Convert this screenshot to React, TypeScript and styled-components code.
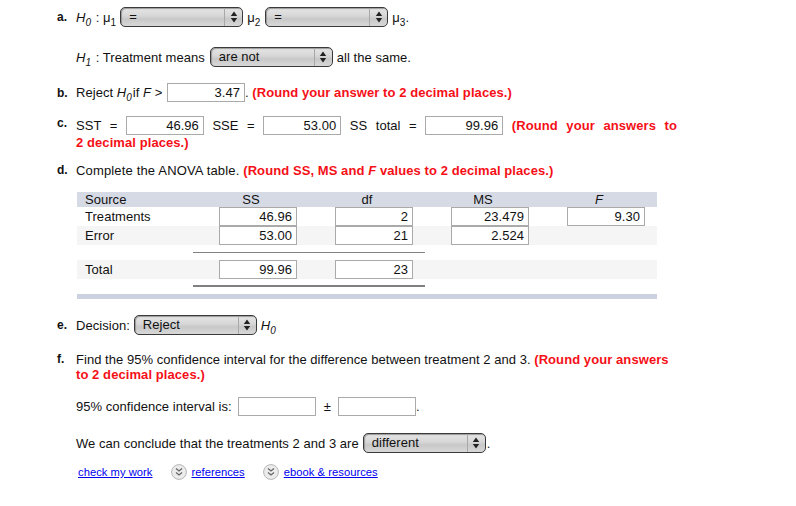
import React from 'react';
import styled, { createGlobalStyle } from 'styled-components';

const GlobalStyle = createGlobalStyle`
  html, body {
    margin: 0;
    padding: 0;
    background: #fff;
  }
  body {
    font-family: "Liberation Sans", Arial, sans-serif;
    font-size: 13px;
    letter-spacing: 0.04px;
    color: #111;
  }
`;

const Page = styled.div`
  width: 796px;
  height: 506px;
  overflow: hidden;
  box-sizing: border-box;
  padding: 7px 0 0 57px;
`;

const Row = styled.div<{ $top?: number; $height?: number; $indent?: boolean }>`
  display: flex;
  align-items: center;
  height: ${(p) => p.$height ?? 20}px;
  margin-top: ${(p) => p.$top ?? 0}px;
  padding-left: ${(p) => (p.$indent ? 19 : 0)}px;
  white-space: pre;
`;

const Label = styled.b`
  display: inline-block;
  flex: none;
  width: 19px;
  font-size: 12px;
`;

const Para = styled.div<{ $top?: number }>`
  display: flex;
  margin-top: ${(p) => p.$top ?? 0}px;
`;

const ParaText = styled.div`
  width: 601px;
  line-height: 15px;
`;

const JustifiedLine = styled.div`
  height: 19px;
  line-height: 19px;
  text-align: justify;
  text-align-last: justify;
`;

const Red = styled.b`
  letter-spacing: 0.08px;
  color: #f50f17;
`;

const Wide = styled.span`
  letter-spacing: 0.16px;
`;

const Sym = styled.i`
  font-style: italic;
`;

const Sub = styled.sub`
  font-size: 10px;
  line-height: 0;
`;

const HypothesisSym = styled(Sym)`
  margin-right: 1px;
`;

const Select = styled.div<{ $left?: number; $right?: number }>`
  flex: none;
  display: inline-flex;
  box-sizing: border-box;
  width: 123px;
  height: 20px;
  margin: 0 ${(p) => p.$right ?? 4}px 0 ${(p) => p.$left ?? 4}px;
  border: 1px solid #3a3a3a;
  border-radius: 5px;
  background: linear-gradient(#e6e6e6 0%, #d6d6d6 45%, #c8c8c8 60%, #d8d8d8 100%);
  box-shadow: inset 1px 1px 1px #999;
`;

const SelectValue = styled.span`
  flex: 1;
  padding-left: 8px;
  line-height: 18px;
`;

const SelectArrows = styled.span`
  flex: none;
  display: flex;
  align-items: center;
  justify-content: center;
  width: 17px;
  border-left: 1px solid #a8a8a8;
`;

const Input = styled.span<{ $left?: number }>`
  flex: none;
  display: inline-block;
  box-sizing: border-box;
  width: 78px;
  height: 19px;
  margin-left: ${(p) => p.$left ?? 0}px;
  padding-right: 4px;
  border: 1px solid #aaa;
  background: #fff;
  text-align: right;
  text-align-last: right;
  line-height: 17px;
  vertical-align: top;
`;

const PlusMinus = styled.span`
  margin: 0 7px 0 8px;
`;

const Table = styled.div`
  width: 580px;
  margin: 14px 0 0 20px;
`;

const Grid = styled.div<{ $shaded?: boolean; $top?: number }>`
  display: grid;
  grid-template-columns: 142px 78px 38px 78px 38px 78px 38px 78px 12px;
  align-items: center;
  height: 19px;
  margin-top: ${(p) => p.$top ?? 0}px;
  background: ${(p) => (p.$shaded ? '#f5f5f5' : '#fff')};
`;

const Head = styled(Grid)`
  height: 15px;
  background: #d6dae5;
`;

const RowName = styled.span`
  padding-left: 8px;
`;

const HeadCell = styled.span<{ $col: number }>`
  grid-column: ${(p) => p.$col};
  padding-right: 14px;
  text-align: center;
`;

const Cell = styled.span<{ $col: number }>`
  grid-column: ${(p) => p.$col};
  display: flex;
`;

const Rule = styled.div<{ $thick?: boolean; $top: number }>`
  width: 232px;
  height: ${(p) => (p.$thick ? 2 : 1)}px;
  margin: ${(p) => p.$top}px 0 0 116px;
  background: #808080;
`;

const FootBar = styled.div`
  height: 5px;
  margin-top: 7px;
  background: #ccd2df;
`;

const Links = styled.div`
  display: flex;
  align-items: center;
  height: 16px;
  margin: 11px 0 0 21px;
  font-size: 11.2px;
`;

const Link = styled.a<{ $gap?: number }>`
  margin-right: ${(p) => p.$gap ?? 0}px;
  color: #0000ee;
  text-decoration: underline;
`;

const ChevronCircle = styled.svg`
  flex: none;
  width: 16px;
  height: 16px;
  margin-right: 5px;
`;

const Arrows = () => (
  <svg width="8" height="12" viewBox="0 0 8 12">
    <path d="M4 0.5 L7.2 5 H0.8 Z M4 11.5 L7.2 7 H0.8 Z" fill="#222" />
  </svg>
);

const DoubleChevron = () => (
  <ChevronCircle viewBox="0 0 16 16">
    <circle cx="8" cy="8" r="7.4" fill="#ececec" stroke="#b5b5b5" />
    <path d="M5 4.5 L8 7 L11 4.5 M5 8.5 L8 11 L11 8.5" fill="none" stroke="#666" strokeWidth="1.3" />
  </ChevronCircle>
);

const Dropdown = ({ value, left, right }: { value: string; left?: number; right?: number }) => (
  <Select $left={left} $right={right}>
    <SelectValue>{value}</SelectValue>
    <SelectArrows>
      <Arrows />
    </SelectArrows>
  </Select>
);

const H = ({ n }: { n: number }) => (
  <HypothesisSym>
    H<Sub>{n}</Sub>
  </HypothesisSym>
);

const Mu = ({ n }: { n: number }) => (
  <span>
    μ<Sub>{n}</Sub>
  </span>
);

const App: React.FC = () => (
  <>
    <GlobalStyle />
    <Page>
      <Row>
        <Label>a.</Label>
        <H n={0} />
        <span>{' : '}</span>
        <Mu n={1} />
        <Dropdown value="=" />
        <Mu n={2} />
        <Dropdown value="=" left={5} />
        <Mu n={3} />
        <span>.</span>
      </Row>
      <Row $top={20} $indent>
        <H n={1} />
        <span>{' : Treatment means'}</span>
        <Dropdown value="are not" left={5} />
        <span>all the same.</span>
      </Row>
      <Row $top={16} $height={19}>
        <Label>b.</Label>
        <span>Reject </span>
        <H n={0} />
        <span>if </span>
        <Sym>F</Sym>
        <span>{' > '}</span>
        <Input $left={1}>3.47</Input>
        <span>. </span>
        <Red>(Round your answer to 2 decimal places.)</Red>
      </Row>
      <Para $top={14}>
        <Label>c.</Label>
        <ParaText>
          <JustifiedLine>
            SST = <Input>46.96</Input> SSE = <Input>53.00</Input> SS total = <Input>99.96</Input>{' '}
            <Red>(Round your answers to</Red>
          </JustifiedLine>
          <Red>2 decimal places.)</Red>
        </ParaText>
      </Para>
      <Row $top={12} $height={16}>
        <Label>d.</Label>
        <Wide>Complete the ANOVA table. </Wide>
        <Red>
          (Round SS, MS and <Sym>F</Sym> values to 2 decimal places.)
        </Red>
      </Row>
      <Table>
        <Head>
          <RowName>Source</RowName>
          <HeadCell $col={2}>SS</HeadCell>
          <HeadCell $col={4}>df</HeadCell>
          <HeadCell $col={6}>MS</HeadCell>
          <HeadCell $col={8}>
            <Sym>F</Sym>
          </HeadCell>
        </Head>
        <Grid>
          <RowName>Treatments</RowName>
          <Cell $col={2}><Input>46.96</Input></Cell>
          <Cell $col={4}><Input>2</Input></Cell>
          <Cell $col={6}><Input>23.479</Input></Cell>
          <Cell $col={8}><Input>9.30</Input></Cell>
        </Grid>
        <Grid $shaded>
          <RowName>Error</RowName>
          <Cell $col={2}><Input>53.00</Input></Cell>
          <Cell $col={4}><Input>21</Input></Cell>
          <Cell $col={6}><Input>2.524</Input></Cell>
        </Grid>
        <Rule $top={7} />
        <Grid $shaded $top={7}>
          <RowName>Total</RowName>
          <Cell $col={2}><Input>99.96</Input></Cell>
          <Cell $col={4}><Input>23</Input></Cell>
        </Grid>
        <Rule $top={6} $thick />
        <FootBar />
      </Table>
      <Row $top={16}>
        <Label>e.</Label>
        <span>Decision:</span>
        <Dropdown value="Reject" />
        <H n={0} />
      </Row>
      <Para $top={17}>
        <Label>f.</Label>
        <ParaText>
          Find the 95% confidence interval for the difference between treatment 2 and 3.{' '}
          <Red>(Round your answers to 2 decimal places.)</Red>
        </ParaText>
      </Para>
      <Row $top={14} $indent>
        <span>95% confidence interval is:</span>
        <Input $left={6} />
        <PlusMinus>±</PlusMinus>
        <Input />
        <span>.</span>
      </Row>
      <Row $top={17} $indent>
        <span>We can conclude that the treatments 2 and 3 are</span>
        <Dropdown value="different" right={1} />
        <span>.</span>
      </Row>
      <Links>
        <Link $gap={18}>check my work</Link>
        <DoubleChevron />
        <Link $gap={18}>references</Link>
        <DoubleChevron />
        <Link>ebook &amp; resources</Link>
      </Links>
    </Page>
  </>
);

export default App;
